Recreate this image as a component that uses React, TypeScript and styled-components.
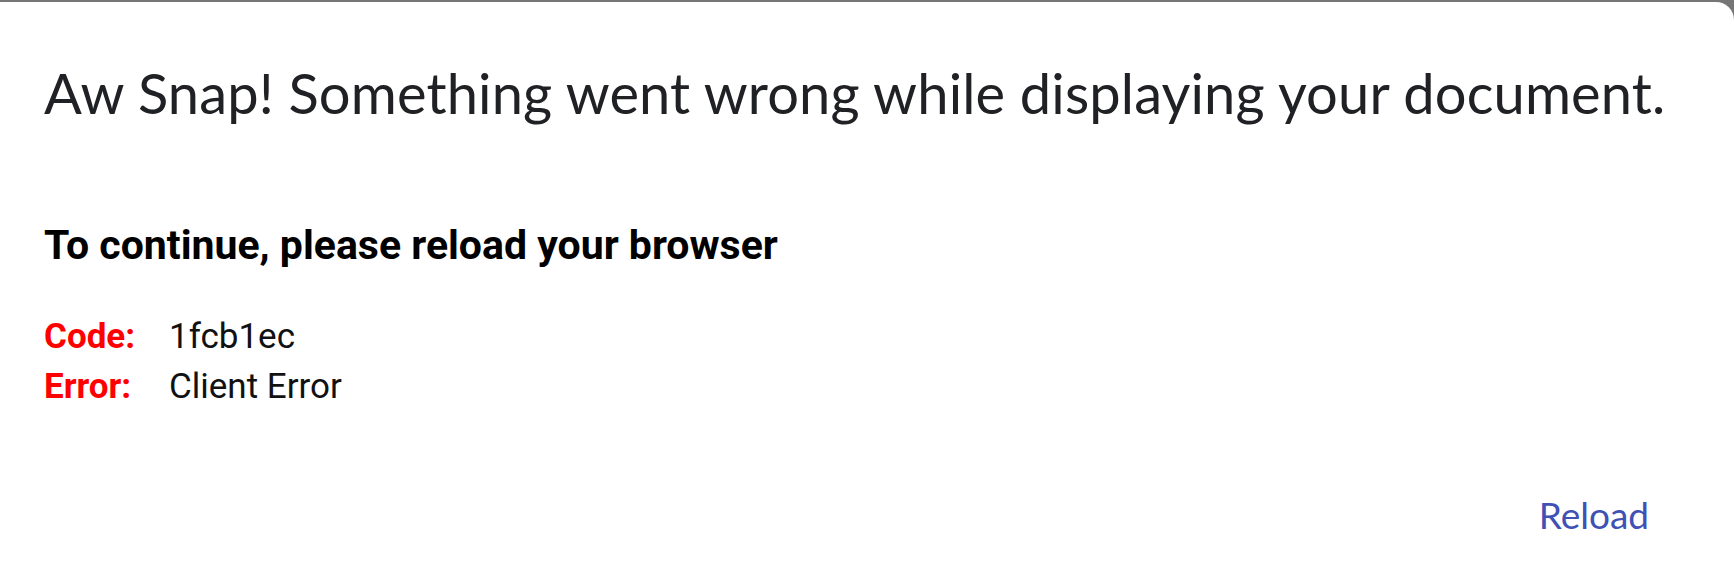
import * as React from 'react';
import styled, { createGlobalStyle } from 'styled-components';

const GlobalStyle = createGlobalStyle`
    html, body {
        margin: 0;
        padding: 0;
        height: 100%;
        background: #767676;
        overflow: hidden;
    }
`;

const Dialog = styled.div`
    display: flex;
    flex-direction: column;
    box-sizing: border-box;
    height: calc(100vh - 2px);
    margin-top: 2px;
    padding: 58px 85px 49px 44px;
    background: #fff;
    border-top-right-radius: 18px;
`;

const Title = styled.h1`
    margin: 0;
    font-family: Lato, "Open Sans", sans-serif;
    font-size: 56px;
    font-weight: 400;
    line-height: 66px;
    letter-spacing: 0.15px;
    white-space: nowrap;
    color: #202124;
`;

const Heading = styled.h2`
    margin: 95px 0 0;
    font-family: Roboto, "Liberation Sans", sans-serif;
    font-size: 41px;
    font-weight: 700;
    line-height: 48px;
    color: #000;
`;

const Details = styled.dl`
    display: grid;
    grid-template-columns: 125px auto;
    margin: 43px 0 0;
    font-family: Roboto, "Liberation Sans", sans-serif;
    font-size: 35px;
    line-height: 50px;
`;

const Label = styled.dt`
    font-weight: 700;
    color: #f00;
`;

const Value = styled.dd`
    margin: 0;
    color: #111;
`;

const Footer = styled.div`
    display: flex;
    justify-content: flex-end;
    margin-top: auto;
`;

const ReloadButton = styled.button`
    padding: 0;
    border: none;
    background: none;
    font-family: Lato, "Open Sans", sans-serif;
    font-size: 37px;
    line-height: 44px;
    color: #3f51b5;
    cursor: pointer;
`;

export default function App() {
    const details = [
        { label: 'Code:', value: '1fcb1ec' },
        { label: 'Error:', value: 'Client Error' },
    ];

    return (
        <>
            <GlobalStyle />
            <Dialog>
                <Title>Aw Snap! Something went wrong while displaying your document.</Title>
                <Heading>To continue, please reload your browser</Heading>
                <Details>
                    {details.map(d => (
                        <React.Fragment key={d.label}>
                            <Label>{d.label}</Label>
                            <Value>{d.value}</Value>
                        </React.Fragment>
                    ))}
                </Details>
                <Footer>
                    <ReloadButton onClick={() => window.location.reload()}>Reload</ReloadButton>
                </Footer>
            </Dialog>
        </>
    );
}
